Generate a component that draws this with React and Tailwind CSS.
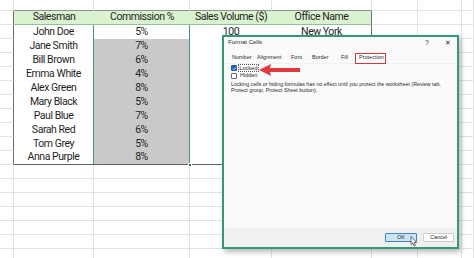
import React from "react";

const names = ["John Doe","Jane Smith","Bill Brown","Emma White","Alex Green","Mary Black","Paul Blue","Sarah Red","Tom Grey","Anna Purple"];
const comm = ["5%","7%","6%","4%","8%","5%","7%","6%","5%","8%"];

const D = "border-r border-b border-r-[#e2e2e2] border-b-[#e2e2e2]";

function Row0() {
  return (
    <>
      <div className={D} />
      <div className="border-r border-b border-r-[#e2e2e2] border-b-[#8a958a]" />
      <div className="border-r border-b border-r-[#e2e2e2] border-b-[#8a958a]" />
      <div className="border-r border-b border-r-[#e2e2e2] border-b-[#8a958a]" />
      <div className="border-r border-b border-r-[#e2e2e2] border-b-[#8a958a]" />
      <div className={D} />
      <div className={D} />
      <div className={D} />
    </>
  );
}

function Header() {
  const h = "bg-[#daf2d0] border-b border-b-[#8fbf9c] flex items-center justify-center whitespace-nowrap";
  return (
    <>
      <div className="border-r border-b border-r-[#6f6f6f] border-b-[#e2e2e2]" />
      <div className={h}>Salesman</div>
      <div className={h}>Commission %</div>
      <div className={h}>Sales Volume ($)</div>
      <div className={h + " border-r border-r-[#6f6f6f]"}>Office Name</div>
      <div className={D} />
      <div className={D} />
      <div className={D} />
    </>
  );
}

function DataRow({ i }) {
  const last = i === 9;
  const bb = last ? " border-b border-b-[#5f5f5f]" : "";
  return (
    <>
      <div className="border-r border-b border-r-[#6f6f6f] border-b-[#e2e2e2]" />
      <div className={"bg-white flex items-center justify-center whitespace-nowrap border-r border-r-[#3e9b7a]" + bb}>{names[i]}</div>
      <div className={(i === 0 ? "bg-white" : "bg-[#c9c9c9]") + " relative flex items-center justify-center border-r border-r-[#3e9b7a]" + bb}>
        {comm[i]}
        {last && <div className="absolute right-[-3px] bottom-[-3px] w-[4px] h-[4px] bg-[#2c6e52] border border-white" />}
      </div>
      <div className={"bg-white flex items-center justify-center" + bb}>{i === 0 ? "100" : ""}</div>
      <div className={"bg-white flex items-center justify-center border-r border-r-[#6f6f6f]" + bb}>{i === 0 ? "New York" : ""}</div>
      <div className={D} />
      <div className={D} />
      <div className={D} />
    </>
  );
}

function Filler() {
  return (
    <>
      {Array.from({ length: 8 }).map((_, k) => (
        <div key={k} className={D} />
      ))}
    </>
  );
}

function Dialog() {
  return (
    <div className="absolute left-[222px] top-[35px] w-[237px] h-[214px] border-2 border-[#2f9b7b] bg-[#fafafa] shadow-[2px_3px_5px_rgba(0,0,0,0.28)] flex flex-col font-['Liberation_Sans',sans-serif] text-[#2a2a2a] tracking-normal">
      <div className="h-[10px] flex items-center pl-[4px] text-[6px]">
        <span>Format Cells</span>
        <span className="ml-auto text-[7px]">?</span>
        <span className="ml-[16px] mr-[6px] text-[7px]">✕</span>
      </div>
      <div className="mt-[6px] h-[11px] flex items-center pl-[8px] text-[5.5px] border-b border-b-[#f0f0f0]">
        <div className="w-[25px]">Number</div>
        <div className="w-[34px]">Alignment</div>
        <div className="w-[21px]">Font</div>
        <div className="w-[29px]">Border</div>
        <div className="w-[14px]">Fill</div>
        <div className="w-[31px] h-[11px] border border-[#d6393c] flex items-center pl-[3px] bg-white">Protection</div>
      </div>
      <div className="relative flex flex-col pl-[7px] text-[5.3px]">
        <div className="h-[8px] flex items-center">
          <div className="w-[6px] h-[6px] rounded-[1px] bg-[#1d5fbf] flex items-center justify-center">
            <svg width="5" height="5" viewBox="0 0 10 10"><path d="M2 5.2 L4.2 7.4 L8.2 2.8" stroke="white" strokeWidth="1.6" fill="none" /></svg>
          </div>
          <span className="ml-[1px] px-[0.5px] border border-dotted border-[#555] leading-[6px] text-[5.5px]">Locked</span>
        </div>
        <div className="h-[8px] flex items-center">
          <div className="w-[6px] h-[6px] rounded-[1px] border border-[#6b6b6b] bg-white" />
          <span className="ml-[2px] px-[1px] text-[5.5px]">Hidden</span>
        </div>
        <div className="mt-[1px] leading-[6px] whitespace-nowrap">
          <div>Locking cells or hiding formulas has no effect until you protect the worksheet (Review tab,</div>
          <div>Protect group, Protect Sheet button).</div>
        </div>
        <svg className="absolute left-[35px] top-[-1px]" width="42" height="14" viewBox="0 0 42 14">
          <path d="M0 7 L12 1 L11 5 L41 5 L41 9 L11 9 L12 13 Z" fill="#e03a3e" />
        </svg>
      </div>
      <div className="mt-auto h-[19px] bg-[#f0f0f0] flex items-center justify-end pr-[3px] text-[5.5px] relative">
        <div className="w-[32px] h-[9px] bg-[#cce4f7] border border-[#3c86d0] rounded-[1px] flex items-center justify-center">OK</div>
        <div className="ml-[6px] w-[31px] h-[9px] bg-white border border-[#cfcfcf] rounded-[1px] flex items-center justify-center">Cancel</div>
        <svg className="absolute left-[186px] top-[8px]" width="8" height="11" viewBox="0 0 8 11">
          <path d="M1 0.5 L1 8.5 L2.8 7 L4.2 10 L5.4 9.4 L4.1 6.5 L6.6 6.5 Z" fill="white" stroke="#333" strokeWidth="0.7" />
        </svg>
      </div>
    </div>
  );
}

export default function App() {
  return (
    <div className="relative w-[474px] h-[258px] overflow-hidden bg-white font-['Roboto',sans-serif] text-[10.5px] tracking-[-0.45px] text-[#1f1f1f] leading-none">
      <div className="grid grid-cols-[14px_80px_96px_82px_100px_46px_44px_1fr] grid-rows-[11px_repeat(18,14px)]">
        <Row0 />
        <Header />
        {names.map((_, i) => (
          <DataRow key={i} i={i} />
        ))}
        {Array.from({ length: 7 }).map((_, k) => (
          <Filler key={k} />
        ))}
      </div>
      <Dialog />
    </div>
  );
}
